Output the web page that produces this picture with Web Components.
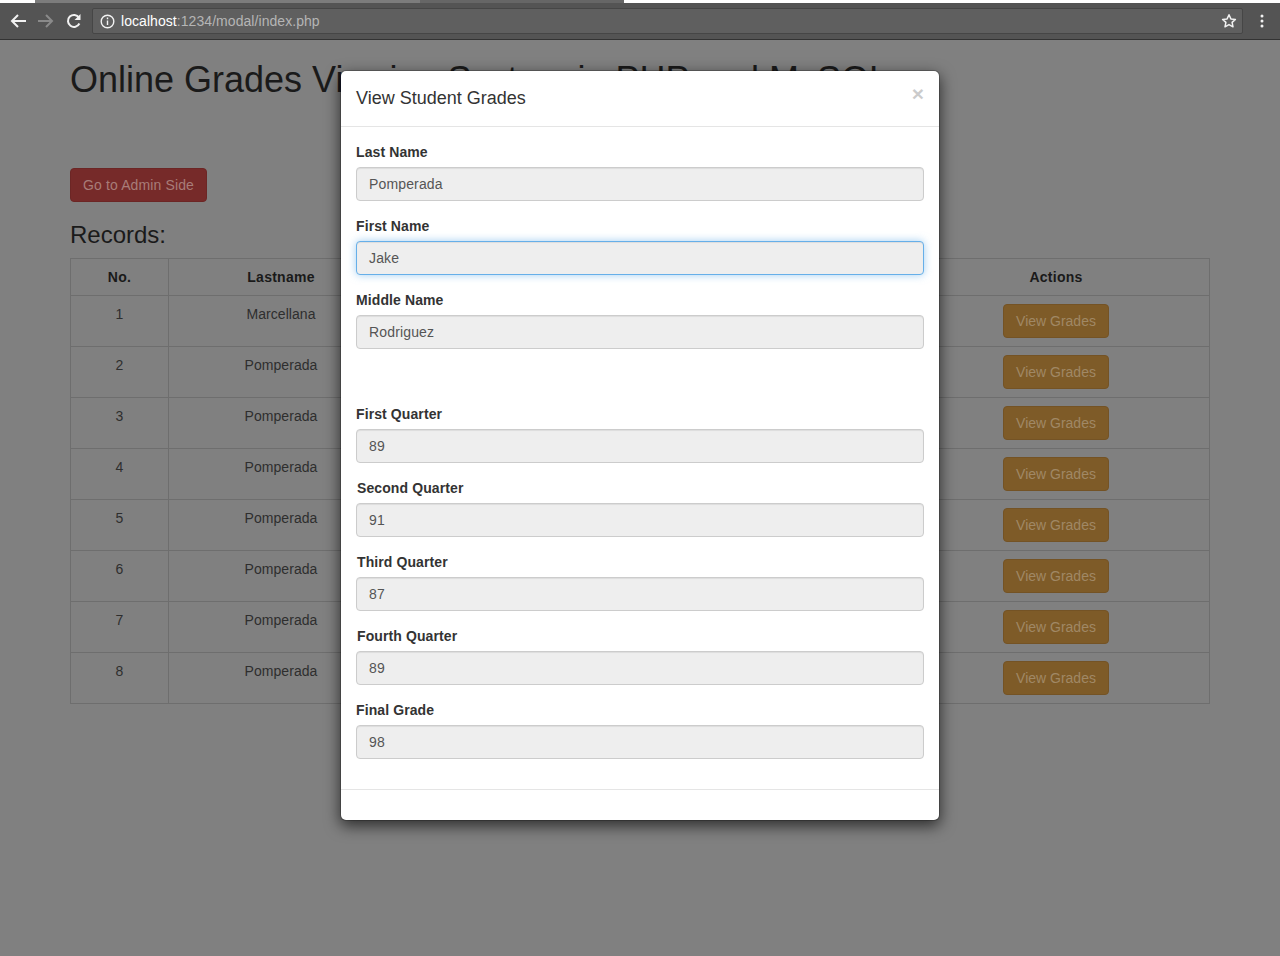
<!DOCTYPE html>
<html lang="en">

<head>
    <meta charset="UTF-8">
    <title>Online Grades Viewing System in PHP and MySQL</title>
    <style>
        html, body { margin: 0; height: 100%; }
        body { background: #808080; font-family: "Liberation Sans", Arial, sans-serif; overflow: hidden; }
    </style>
</head>

<body>
    <browser-bar url-host="localhost" url-rest=":1234/modal/index.php"></browser-bar>
    <grades-page></grades-page>

    <grades-modal heading="View Student Grades">
        <grade-field label="Last Name" value="Pomperada"></grade-field>
        <grade-field label="First Name" value="Jake" focused></grade-field>
        <grade-field label="Middle Name" value="Rodriguez"></grade-field>
        <br><br>
        <grade-field label="First Quarter" value="89"></grade-field>
        <grade-field label="Second Quarter" value="91" nudge></grade-field>
        <grade-field label="Third Quarter" value="87" nudge></grade-field>
        <grade-field label="Fourth Quarter" value="89" nudge></grade-field>
        <grade-field label="Final Grade" value="98"></grade-field>
    </grades-modal>

    <script>
        class BrowserBar extends HTMLElement {
            constructor() {
                super();
                const host = this.getAttribute('url-host');
                const rest = this.getAttribute('url-rest');
                this.attachShadow({ mode: 'open' }).innerHTML = `
                <style>
                    :host { display: block; height: 40px; background: #545454; border-bottom: 1px solid #333; box-sizing: border-box; position: relative; }
                    .tabs { display: flex; height: 3px; background: #6e6e6e; }
                    .tabs i { display: block; height: 3px; }
                    .row { display: flex; align-items: center; height: 36px; }
                    .nav { display: flex; align-items: center; width: 92px; flex: none; padding-left: 10px; box-sizing: border-box; gap: 10px; }
                    .nav .reload { margin-left: 2px; }
                    svg { display: block; flex: none; }
                    .url { flex: none; width: 1151px; height: 26px; box-sizing: border-box; background: #5f5f5f; border: 1px solid #464646; border-radius: 2px; display: flex; align-items: center; padding: 0 5px 0 7px; font-size: 14px; letter-spacing: .06px; color: #b5b5b5; }
                    .url b { font-weight: normal; color: #fff; }
                    .addr { margin-left: 6px; flex: 1; }
                    .menu { flex: 1; display: flex; justify-content: center; }
                </style>
                <div class="tabs"><i style="width:35px;background:#fff"></i><i style="width:385px;background:#7c7c7c"></i><i style="width:204px;background:#666"></i><i style="width:656px;background:#fff"></i></div>
                <div class="row">
                    <div class="nav">
                        <svg width="17" height="16" viewBox="0 0 17 16" fill="none" stroke="#f2f2f2" stroke-width="2"><path d="M16 8H2M8 2L2 8l6 6"/></svg>
                        <svg width="17" height="16" viewBox="0 0 17 16" fill="none" stroke="#8a8a8a" stroke-width="2"><path d="M1 8h14M9 2l6 6-6 6"/></svg>
                        <svg class="reload" width="16" height="16" viewBox="0 0 16 16" fill="none" stroke="#f2f2f2" stroke-width="2"><path d="M13.4 10.5A6 6 0 1 1 13 4.6"/><path d="M14.5 1v6h-6" fill="#f2f2f2" stroke="none"/></svg>
                    </div>
                    <div class="url">
                        <svg width="15" height="15" viewBox="0 0 15 15" fill="none" stroke="#f2f2f2" stroke-width="1.4"><circle cx="7.5" cy="7.5" r="6.3"/><path d="M7.5 6.5v4.6M7.5 3.6v1.6"/></svg>
                        <span class="addr"><b>${host}</b>${rest}</span>
                        <svg width="16" height="16" viewBox="0 0 16 16" fill="none" stroke="#f2f2f2" stroke-width="1.5" stroke-linejoin="round"><path d="M8 1.8l1.9 4.1 4.5.5-3.3 3 .9 4.4L8 11.6l-4 2.2.9-4.4-3.3-3 4.5-.5z"/></svg>
                    </div>
                    <div class="menu">
                        <svg width="4" height="14" viewBox="0 0 4 14" fill="#f2f2f2"><circle cx="2" cy="2" r="1.5"/><circle cx="2" cy="7" r="1.5"/><circle cx="2" cy="12" r="1.5"/></svg>
                    </div>
                </div>`;
            }
        }
        customElements.define('browser-bar', BrowserBar);

        class DimButton extends HTMLElement {
            constructor() {
                super();
                this.attachShadow({ mode: 'open' }).innerHTML = `
                <style>
                    :host { display: inline-block; box-sizing: border-box; height: 34px; line-height: 32px; padding: 0 12px; font-size: 14px; border: 1px solid var(--edge); border-radius: 4px; background: var(--fill); color: var(--ink); white-space: nowrap; }
                </style>
                <slot></slot>`;
            }
        }
        customElements.define('dim-button', DimButton);

        class GradesPage extends HTMLElement {
            constructor() {
                super();
                const names = ['Marcellana', 'Pomperada', 'Pomperada', 'Pomperada', 'Pomperada', 'Pomperada', 'Pomperada', 'Pomperada'];
                const rows = names.map((name, i) => `
                    <tr>
                        <td>${i + 1}</td>
                        <td>${name}</td>
                        <td></td>
                        <td><dim-button class="warn">View Grades</dim-button></td>
                    </tr>`).join('');
                this.attachShadow({ mode: 'open' }).innerHTML = `
                <style>
                    :host { display: block; padding: 0 70px; color: #1a1a1a; font-size: 14px; line-height: 20px; }
                    h1 { margin: 0; padding-top: 20px; height: 40px; font-size: 36px; line-height: 40px; font-weight: 500; }
                    .admin { margin-top: 68px; letter-spacing: .13px; --fill: #762a29; --edge: #6c2625; --ink: #a87c78; }
                    h3 { margin: 20px 0 10px; font-size: 24px; line-height: 26px; font-weight: 500; }
                    table { width: 1139px; border-collapse: collapse; table-layout: fixed; }
                    th, td { border: 1px solid #6e6e6e; padding: 8px; text-align: center; vertical-align: top; color: #2e2e2e; }
                    th { height: 20px; color: #1a1a1a; letter-spacing: .25px; }
                    td { height: 34px; letter-spacing: .05px; }
                    .warn { letter-spacing: 0; --fill: #7e5b28; --edge: #745325; --ink: #a08865; }
                </style>
                <h1>Online Grades Viewing System in PHP and MySQL</h1>
                <div class="admin"><dim-button>Go to Admin Side</dim-button></div>
                <h3>Records:</h3>
                <table>
                    <colgroup><col style="width:98px"><col style="width:225px"><col style="width:509px"><col style="width:307px"></colgroup>
                    <tr><th>No.</th><th>Lastname</th><th></th><th>Actions</th></tr>
                    ${rows}
                </table>`;
            }
        }
        customElements.define('grades-page', GradesPage);

        class GradeField extends HTMLElement {
            constructor() {
                super();
                const focus = this.hasAttribute('focused') ? 'focus' : '';
                const nudge = this.hasAttribute('nudge') ? 'nudge' : '';
                this.attachShadow({ mode: 'open' }).innerHTML = `
                <style>
                    :host { display: block; margin-bottom: 15px; font-size: 14px; line-height: 20px; }
                    label { display: block; margin-bottom: 5px; font-weight: bold; color: #333; letter-spacing: .1px; }
                    .nudge { padding-left: 1px; }
                    .box { box-sizing: border-box; height: 34px; padding: 6px 12px; background: #eee; border: 1px solid #ccc; border-radius: 4px; color: #555; letter-spacing: .15px; box-shadow: inset 0 1px 1px rgba(0,0,0,.075); }
                    .focus { border-color: #66afe9; box-shadow: inset 0 1px 1px rgba(0,0,0,.075), 0 0 8px rgba(102,175,233,.6); }
                </style>
                <label class="${nudge}">${this.getAttribute('label')}</label>
                <div class="box ${focus}">${this.getAttribute('value')}</div>`;
            }
        }
        customElements.define('grade-field', GradeField);

        class GradesModal extends HTMLElement {
            constructor() {
                super();
                this.attachShadow({ mode: 'open' }).innerHTML = `
                <style>
                    :host { display: block; position: absolute; left: 340px; top: 70px; width: 600px; box-sizing: border-box; background: #fff; border: 1px solid rgba(0,0,0,.2); background-clip: padding-box; border-radius: 6px; box-shadow: 0 5px 15px rgba(0,0,0,.65); font-size: 14px; line-height: 20px; color: #333; }
                    header { display: flex; justify-content: space-between; height: 56px; box-sizing: border-box; padding: 15px; border-bottom: 1px solid #e5e5e5; }
                    h4 { margin: 0; font-size: 18px; line-height: 25.7px; font-weight: 500; }
                    .close { font-size: 21px; font-weight: bold; line-height: 1; color: #000; opacity: .2; margin-top: -3px; }
                    .body { padding: 15px; }
                    footer { height: 30px; border-top: 1px solid #e5e5e5; }
                </style>
                <header><h4>${this.getAttribute('heading')}</h4><span class="close">×</span></header>
                <div class="body"><slot></slot></div>
                <footer></footer>`;
            }
        }
        customElements.define('grades-modal', GradesModal);
    </script>
</body>

</html>
